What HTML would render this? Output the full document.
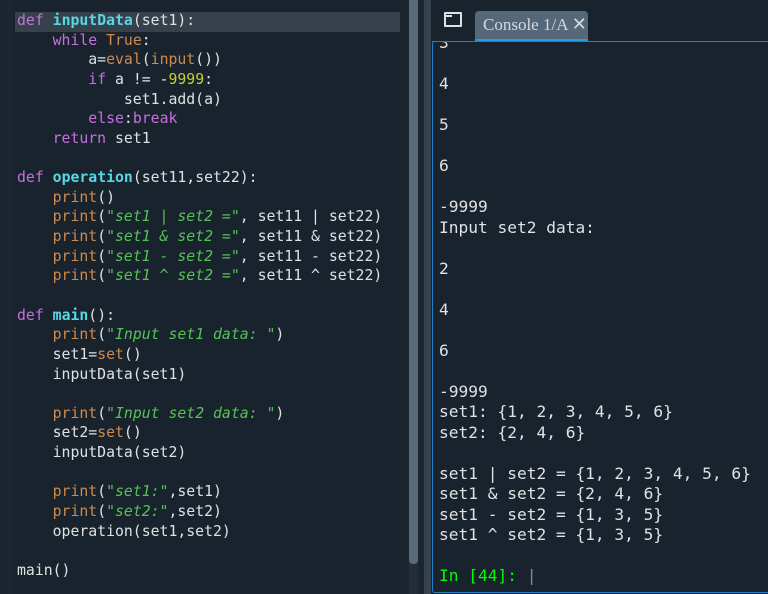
<!DOCTYPE html>
<html style="width:768px;height:594px;overflow:hidden"><head><style>
body{margin:0;width:768px;height:594px;background:#19232d;overflow:hidden;position:relative;font-family:"DejaVu Sans Mono","Liberation Mono",monospace}
.ed{position:absolute;left:0;top:0;width:400px;height:594px;background:#19232d}
.gut{position:absolute;left:0;top:0;width:13px;height:594px;background:#1c2630}
.hl{position:absolute;left:15px;top:12px;width:385px;height:20px;background:#37414b}
pre{margin:0;font-family:inherit}
.code{position:absolute;left:17px;top:11px;font-size:14.8px;line-height:19.64px;color:#e0e1e3}
.k{color:#c670e0}.f{color:#57d6e4;font-weight:bold}.b{color:#d08a4c}.n{color:#c7cc3a}.s{color:#56c256;font-style:italic}
.sb1{position:absolute;left:400px;top:0;width:9px;height:594px;background:#1c2630}
.sbt{position:absolute;left:409px;top:0;width:9px;height:594px;background:#222d37}
.th{position:absolute;left:409px;top:0;width:9px;height:564px;background:#5b6b7a;border-radius:0 0 4px 4px}
.sb2{position:absolute;left:418px;top:0;width:6px;height:594px;background:#1c2630}
.sb3{position:absolute;left:424px;top:0;width:7px;height:594px;background:#37424f}
.con{position:absolute;left:432px;top:41px;width:340px;height:550px;border:1px solid #1e80c8;border-radius:3px;background:#19232d}
.tab{position:absolute;left:475px;top:11px;height:28px;background:#54687a;border-radius:4px 4px 0 0;border-bottom:3px solid #259ae9;font-family:"Liberation Serif",serif;font-size:17px;color:#d4d9de;line-height:28px;padding-left:8px;width:105px}
.icon{position:absolute;left:444px;top:12px;width:14px;height:11px;border:2px solid #e0e1e3;border-radius:1px}
.icon:before{content:"";position:absolute;left:-2px;top:1px;width:8px;height:2px;background:#e0e1e3}
.out{position:absolute;left:439px;top:33px;font-size:16.2px;line-height:20.5px;color:#e0e1e3}
.g{color:#00ff00}
</style></head><body>
<div class="ed"></div><div class="gut"></div><div class="hl"></div>
<pre class="code"><span class="k">def</span> <span class="f">inputData</span>(set1):
    <span class="k">while</span> <span class="b">True</span>:
        a=<span class="b">eval</span>(<span class="b">input</span>())
        <span class="k">if</span> a != -<span class="n">9999</span>:
            set1.add(a)
        <span class="k">else</span>:<span class="k">break</span>
    <span class="k">return</span> set1

<span class="k">def</span> <span class="f">operation</span>(set11,set22):
    <span class="b">print</span>()
    <span class="b">print</span>(<span class="s">"set1 | set2 ="</span>, set11 | set22)
    <span class="b">print</span>(<span class="s">"set1 &amp; set2 ="</span>, set11 &amp; set22)
    <span class="b">print</span>(<span class="s">"set1 - set2 ="</span>, set11 - set22)
    <span class="b">print</span>(<span class="s">"set1 ^ set2 ="</span>, set11 ^ set22)

<span class="k">def</span> <span class="f">main</span>():
    <span class="b">print</span>(<span class="s">"Input set1 data: "</span>)
    set1=<span class="b">set</span>()
    inputData(set1)

    <span class="b">print</span>(<span class="s">"Input set2 data: "</span>)
    set2=<span class="b">set</span>()
    inputData(set2)

    <span class="b">print</span>(<span class="s">"set1:"</span>,set1)
    <span class="b">print</span>(<span class="s">"set2:"</span>,set2)
    operation(set1,set2)

main()</pre>
<div class="sb1"></div><div class="sbt"></div><div class="th"></div><div class="sb2"></div><div class="sb3"></div>
<div class="con"></div>
<pre class="out">3

4

5

6

-9999
Input set2 data:

2

4

6

-9999
set1: {1, 2, 3, 4, 5, 6}
set2: {2, 4, 6}

set1 | set2 = {1, 2, 3, 4, 5, 6}
set1 &amp; set2 = {2, 4, 6}
set1 - set2 = {1, 3, 5}
set1 ^ set2 = {1, 3, 5}

<span class="g">In [44]:</span> <span style="color:#888">|</span></pre>
<div style="position:absolute;left:433px;top:0;width:335px;height:42px;background:#19232d"></div>
<div class="icon"></div>
<div class="tab">Console 1/A <span style="font-family:'DejaVu Sans';font-size:18px">✕</span></div>
<div style="position:absolute;left:432px;top:41px;width:336px;height:1px;background:#1e80c8"></div>
</body></html>
